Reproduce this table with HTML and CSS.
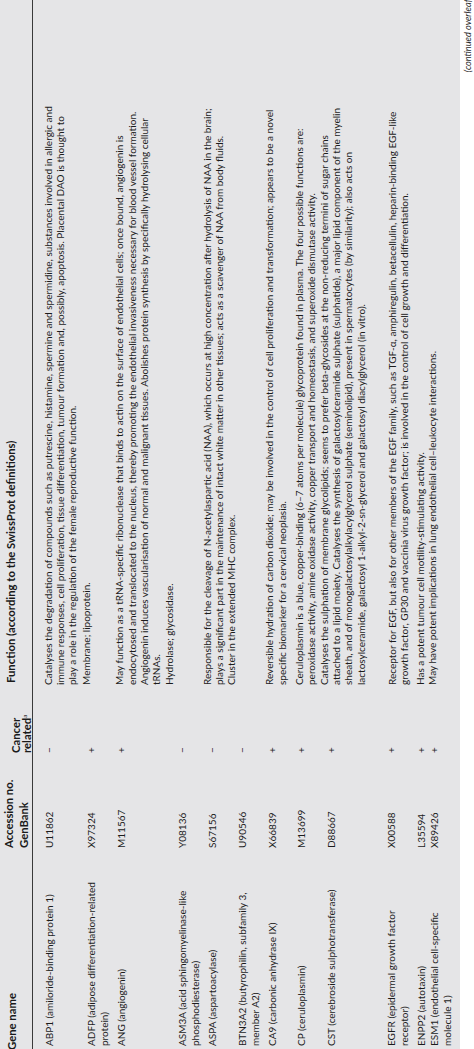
FILE: index.html
```html
<!DOCTYPE html>
<html>
<head>
<meta charset="utf-8">
<link rel="stylesheet" href="styles.css">
</head>
<body>
<div class="page">
  <div class="sheet">
    <div class="head">
      <div class="h gene">Gene name</div>
      <div class="h acc">Accession no.<br>GenBank</div>
      <div class="h can">Cancer<br>related<sup>a</sup></div>
      <div class="h fn">Function (according to the SwissProt definitions)</div>
    </div>
    <div class="body">
      <div class="left">
        <div class="row r1"><div class="gene">ABP1 (amiloride-binding protein 1)</div><div class="acc">U11862</div><div class="can">−</div></div>
        <div class="row r2"><div class="gene">ADFP (adipose differentiation-related<br>protein)</div><div class="acc">X97324</div><div class="can">+</div></div>
        <div class="row r3"><div class="gene">ANG (angiogenin)</div><div class="acc">M11567</div><div class="can">+</div></div>
        <div class="row r4"><div class="gene">ASM3A (acid sphingomyelinase-like<br>phosphodiesterase)</div><div class="acc">Y08136</div><div class="can">−</div></div>
        <div class="row r5"><div class="gene">ASPA (aspartoacylase)</div><div class="acc">S67156</div><div class="can">−</div></div>
        <div class="row r6"><div class="gene">BTN3A2 (butyrophilin, subfamily 3,<br>member A2)</div><div class="acc">U90546</div><div class="can">−</div></div>
        <div class="row r7"><div class="gene">CA9 (carbonic anhydrase IX)</div><div class="acc">X66839</div><div class="can">+</div></div>
        <div class="row r8"><div class="gene">CP (ceruloplasmin)</div><div class="acc">M13699</div><div class="can">+</div></div>
        <div class="row r9"><div class="gene">CST (cerebroside sulphotransferase)</div><div class="acc">D88667</div><div class="can">+</div></div>
        <div class="row r10"><div class="gene">EGFR (epidermal growth factor<br>receptor)</div><div class="acc">X00588</div><div class="can">+</div></div>
        <div class="row r11"><div class="gene">ENPP2 (autotaxin)</div><div class="acc">L35594</div><div class="can">+</div></div>
        <div class="row r12"><div class="gene">ESM1 (endothelial cell-specific<br>molecule 1)</div><div class="acc">X89426</div><div class="can">+</div></div>
      </div>
      <div class="fncol">
        <div class="f">Catalyses the degradation of compounds such as putrescine, histamine, spermine and spermidine, substances involved in allergic and<br>immune responses, cell proliferation, tissue differentiation, tumour formation and, possibly, apoptosis. Placental DAO is thought to<br>play a role in the regulation of the female reproductive function.</div>
        <div class="f f2">Membrane; lipoprotein.</div>
        <div class="f f3">May function as a tRNA-specific ribonuclease that binds to actin on the surface of endothelial cells; once bound, angiogenin is<br>endocytosed and translocated to the nucleus, thereby promoting the endothelial invasiveness necessary for blood vessel formation.<br>Angiogenin induces vascularisation of normal and malignant tissues. Abolishes protein synthesis by specifically hydrolysing cellular<br>tRNAs.</div>
        <div class="f">Hydrolase; glycosidase.</div>
        <div class="f f5">Responsible for the cleavage of N-acetylaspartic acid (NAA), which occurs at high concentration after hydrolysis of NAA in the brain;<br>plays a significant part in the maintenance of intact white matter in other tissues; acts as a scavenger of NAA from body fluids.</div>
        <div class="f">Cluster in the extended MHC complex.</div>
        <div class="f f7">Reversible hydration of carbon dioxide; may be involved in the control of cell proliferation and transformation; appears to be a novel<br>specific biomarker for a cervical neoplasia.</div>
        <div class="f f8">Ceruloplasmin is a blue, copper-binding (6–7 atoms per molecule) glycoprotein found in plasma. The four possible functions are:<br>peroxidase activity, amine oxidase activity, copper transport and homeostasis, and superoxide dismutase activity.</div>
        <div class="f">Catalyses the sulphation of membrane glycolipids; seems to prefer beta-glycosides at the non-reducing termini of sugar chains<br>attached to a lipid moiety. Catalyses the synthesis of galactosylceramide sulphate (sulphatide), a major lipid component of the myelin<br>sheath, and of monogalactosylalkylacylglycerol sulphate (seminolipid), present in spermatocytes (by similarity); also acts on<br>lactosylceramide, galactosyl 1-alkyl-2-sn-glycerol and galactosyl diacylglycerol (in vitro).</div>
        <div class="f f10">Receptor for EGF, but also for other members of the EGF family, such as TGF-α, amphiregulin, betacellulin, heparin-binding EGF-like<br>growth factor, GP30 and vaccinia virus growth factor; is involved in the control of cell growth and differentiation.</div>
        <div class="f f11">Has a potent tumour cell motility-stimulating activity.</div>
        <div class="f">May have potent implications in lung endothelial cell–leukocyte interactions.</div>
      </div>
    </div>
  </div>
  <div class="cont">(continued overleaf)</div>
</div>
</body>
</html>
```

FILE: styles.css
```css
html, body {
  margin: 0;
  padding: 0;
  background: #ffffff;
  overflow: hidden;
}
body {
  width: 474px;
  height: 1049px;
}
.page {
  width: 1054px;
  height: 474px;
  transform-origin: 0 0;
  transform: translate(0, 1051px) rotate(-90deg);
  font-family: Lato, "Open Sans", sans-serif;
  font-size: 10px;
  line-height: 12.4px;
  color: #1c1c1c;
  display: flex;
  flex-direction: column;
}
.sheet {
  height: 460px;
  background: #e5e5e7;
  display: flex;
  flex-direction: column;
  white-space: nowrap;
}
.head {
  display: flex;
  align-items: flex-start;
  height: 32px;
  border-bottom: 1px solid #3a3a3a;
  font-weight: 700;
  font-size: 11.3px;
  color: #1a1a1a;
}
.h { flex: none; }
.head .gene { width: 202px; padding-left: 1px; padding-top: 5px; line-height: 14px; }
.head .acc { width: 95px; padding-top: 2px; line-height: 14.5px; }
.head .can { width: 70px; padding-top: 10px; line-height: 11px; }
.head .fn { padding-top: 4px; line-height: 14px; }
.head sup { font-size: 6.5px; line-height: 0; vertical-align: 4px; font-weight: 400; }
.body {
  display: flex;
}
.left {
  width: 366px;
  flex: none;
  padding-top: 9.5px;
  display: flex;
  flex-direction: column;
}
.row { display: flex; }
.row .gene { width: 198px; padding-left: 5px; }
.row .acc { width: 95px; }
.row .can { width: 68px; }
.r1 { height: 42.7px; }
.r2 { height: 30px; }
.r3 { height: 61.3px; }
.r4 { height: 29.7px; }
.r5 { height: 30.3px; }
.r6 { height: 30px; }
.r7 { height: 29px; }
.r8 { height: 30px; }
.r9 { height: 59.7px; }
.r10 { height: 30px; }
.r11 { height: 13.3px; }
.fncol {
  flex: 1;
  padding-top: 8.5px;
  display: flex;
  flex-direction: column;
}
.f2 { margin-top: 1px; }
.f3 { margin-top: 21px; }
.f5 { margin-top: 25.5px; }
.f7 { margin-top: 25.5px; }
.f8 { margin-top: 4.5px; }
.f10 { margin-top: 18.5px; }
.f11 { margin-top: 3.5px; }
.cont {
  align-self: flex-end;
  margin-top: 2px;
  font-style: italic;
  font-size: 9.2px;
  line-height: 12px;
  color: #2a2a2a;
}
```
